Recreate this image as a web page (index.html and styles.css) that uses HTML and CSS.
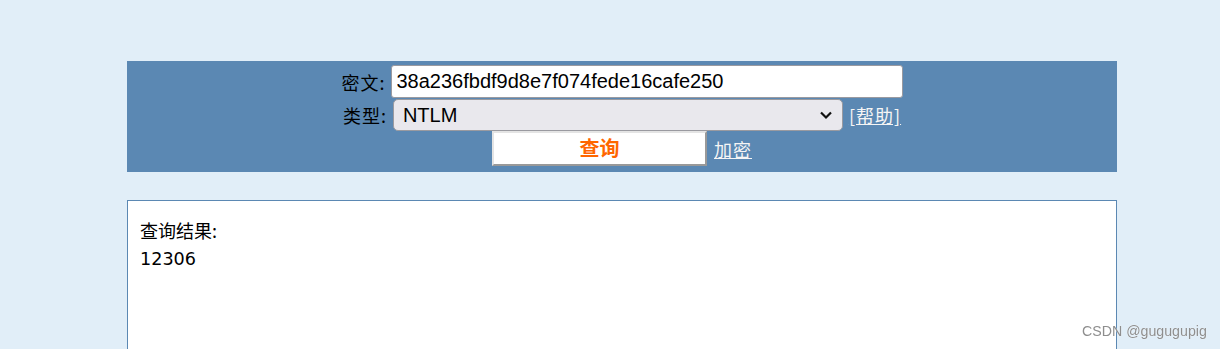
FILE: index.html
```html
<!DOCTYPE html>
<html lang="zh">
<head>
<meta charset="utf-8">
<title>查询</title>
<link rel="stylesheet" href="styles.css">
</head>
<body>
<div class="page">
  <form class="panel">
    <div class="row">
      <label class="lbl">密文:</label>
      <input class="txt" type="text" value="38a236fbdf9d8e7f074fede16cafe250">
    </div>
    <div class="row row2">
      <label class="lbl">类型:</label>
      <span class="selwrap">
        <select class="sel"><option>NTLM</option></select>
        <svg class="chev" width="14" height="10" viewBox="0 0 14 10"><path d="M2 2.5 L7 7.5 L12 2.5" fill="none" stroke="#111" stroke-width="2.2"/></svg>
      </span>
      <a class="lnk" href="#">[帮助]</a>
    </div>
    <div class="row row3">
      <button class="btn" type="button">查询</button>
      <a class="lnk" href="#">加密</a>
    </div>
  </form>
  <div class="result">
    <div class="rtitle">查询结果:</div>
    <div class="rval">12306</div>
  </div>
</div>
<div class="wm">CSDN @gugugupig</div>
</body>
</html>
```

FILE: styles.css
```css
html, body {
  margin: 0;
  padding: 0;
  height: 100%;
  overflow: hidden;
}
body {
  background: #e1eef8;
  font-family: "Noto Sans CJK SC", "Liberation Sans", sans-serif;
  color: #000;
}
.page {
  width: 990px;
  margin: 61px 0 0 127px;
}
.panel {
  background: #5b88b3;
  padding: 4px 0 6px;
  display: flex;
  flex-direction: column;
  align-items: center;
}
.row {
  display: flex;
  align-items: center;
  justify-content: center;
  gap: 5px;
}
.row2 {
  margin-top: 1px;
  gap: 6px;
}
.row3 {
  gap: 7px;
}
.lbl {
  font-size: 18px;
  line-height: 24px;
  letter-spacing: 1px;
  font-family: "Noto Sans CJK SC", sans-serif;
}
.txt {
  box-sizing: border-box;
  width: 512px;
  height: 33px;
  margin: 0;
  border: 1px solid #9a9aa0;
  border-radius: 3px;
  background: #fff;
  padding: 0 5px;
  font-family: "Liberation Sans", Arial, sans-serif;
  font-size: 20px;
  color: #000;
  outline: none;
}
.selwrap {
  position: relative;
  display: block;
  height: 32px;
}
.sel {
  box-sizing: border-box;
  width: 450px;
  height: 32px;
  margin: 0;
  -webkit-appearance: none;
  appearance: none;
  background: #e9e8ed;
  border: 1px solid #9a9aa0;
  border-radius: 5px;
  padding: 0 9px;
  font-family: "Liberation Sans", Arial, sans-serif;
  font-size: 20px;
  color: #000;
}
.chev {
  position: absolute;
  left: 426px;
  top: 11px;
  pointer-events: none;
}
.lnk {
  color: #f5f5f5;
  font-size: 18px;
  line-height: 24px;
  letter-spacing: 1px;
  text-decoration: underline;
  font-family: "Noto Sans CJK SC", sans-serif;
}
.btn {
  box-sizing: border-box;
  width: 215px;
  height: 35px;
  margin: 0;
  background: #fff;
  border: 2px solid;
  border-color: #e4e4e4 #999 #999 #e4e4e4;
  color: #ff6600;
  font-weight: bold;
  font-size: 20px;
  font-family: "Noto Sans CJK SC", sans-serif;
  padding: 0 0 2px;
  line-height: 29px;
}
.result {
  margin-top: 28px;
  background: #fff;
  border: 1px solid #5b88b3;
  height: 300px;
  padding: 14px 12px;
}
.rtitle {
  font-size: 18px;
  line-height: 30px;
  font-family: "Noto Sans CJK SC", sans-serif;
}
.rval {
  font-size: 17.6px;
  line-height: 28px;
  font-family: "DejaVu Sans", Verdana, sans-serif;
}
.wm {
  position: fixed;
  left: 1082px;
  top: 323px;
  font-family: "Liberation Sans", Arial, sans-serif;
  font-size: 14.2px;
  color: #8e8e8e;
  text-shadow: 0 0 1px #fff;
}
```
